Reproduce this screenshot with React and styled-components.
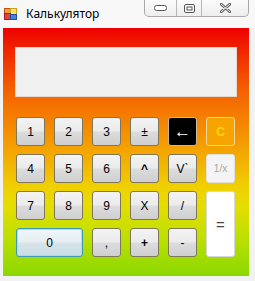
import React from 'react';
import styled, { createGlobalStyle, css } from 'styled-components';

const Global = createGlobalStyle`
  html, body {
    margin: 0;
    padding: 0;
    background: #f0f0f0;
  }
  #root {
    width: 255px;
    height: 281px;
    overflow: hidden;
  }
`;

const Window = styled.div`
  width: 255px;
  height: 281px;
  background: #f2f2f2;
  font-family: "Noto Sans", "Liberation Sans", sans-serif;
  display: flex;
  flex-direction: column;
`;

const TitleBar = styled.div`
  height: 28px;
  display: flex;
  align-items: flex-start;
  background: #f8f8f8;
`;

const AppIcon = styled.svg`
  margin: 8px 0 0 4px;
  flex-shrink: 0;
`;

const Title = styled.div`
  margin: 5px 0 0 9px;
  font-size: 12px;
  color: #000;
  flex: 1;
`;

const Controls = styled.div`
  display: flex;
  height: 16px;
  margin-right: 6px;
  border: 1px solid #a9a9a9;
  border-top: none;
  border-radius: 0 0 5px 5px;
  background: linear-gradient(#fbfbfb, #eeeeee);
  overflow: hidden;
`;

const Ctrl = styled.div`
  width: ${p => p.$w}px;
  display: flex;
  align-items: center;
  justify-content: center;
  & + & {
    border-left: 1px solid #b8b8b8;
  }
`;

const Panel = styled.div`
  width: 246px;
  height: 248px;
  margin-left: 3px;
  box-sizing: border-box;
  padding-top: 19px;
  background: linear-gradient(
    #ee0000 0%,
    #f02a00 10%,
    #f45e00 24%,
    #f58400 38%,
    #f3ac00 52%,
    #f0d000 64%,
    #e4de00 72%,
    #bfe000 84%,
    #8ad800 100%
  );
`;

const Display = styled.div`
  width: 222px;
  height: 50px;
  margin-left: 12px;
  box-sizing: border-box;
  background: #f0f0f0;
  border: 1px solid #e6d8cc;
`;

const Keys = styled.div`
  margin: 20px 0 0 13px;
  display: grid;
  grid-template-columns: repeat(6, 29px);
  grid-auto-rows: 29px;
  column-gap: 9px;
  row-gap: 8px;
`;

const variants = {
  normal: css`
    background: linear-gradient(#f3f3f3 0%, #ebebeb 48%, #dcdcdc 52%, #cfcfcf 100%);
    border: 1px solid #80775a;
    color: #000;
  `,
  dark: css`
    background: #000;
    border: 1px solid #c9b99a;
    color: #fff;
    font-size: 17px;
  `,
  orange: css`
    background: #f7a400;
    border: 1px solid #f5d6a0;
    color: #ffd800;
    font-weight: bold;
  `,
  disabled: css`
    background: #f4f4f4;
    border: 1px solid #e0e0e0;
    color: #a8a8a8;
    font-size: 10px;
  `,
  white: css`
    background: #fff;
    border: 1px solid #d8d8d8;
    color: #444;
    font-size: 15px;
  `,
  focus: css`
    background: linear-gradient(#f0f6f8 0%, #e6eff3 48%, #d6e4ea 52%, #cadde5 100%);
    border: 1px solid #3c9cb4;
    box-shadow: inset 0 0 0 1px #a8dcea;
    color: #000;
  `,
};

const Key = styled.div`
  box-sizing: border-box;
  border-radius: 3px;
  display: flex;
  align-items: center;
  justify-content: center;
  font-family: "Liberation Sans", Arial, sans-serif;
  font-size: 12px;
  font-weight: ${p => (p.$bold ? 'bold' : 'normal')};
  grid-column: ${p => p.$col || 'auto'};
  grid-row: ${p => p.$row || 'auto'};
  ${p => variants[p.$v || 'normal']}
`;

const keys = [
  { t: '1' }, { t: '2' }, { t: '3' }, { t: '±' }, { t: '←', v: 'dark' }, { t: 'C', v: 'orange' },
  { t: '4' }, { t: '5' }, { t: '6' }, { t: '^', bold: true }, { t: 'V`' }, { t: '1/x', v: 'disabled' },
  { t: '7' }, { t: '8' }, { t: '9' }, { t: 'X' }, { t: '/' },
  { t: '=', v: 'white', col: '6', row: '3 / span 2' },
  { t: '0', v: 'focus', col: '1 / span 2', row: '4' },
  { t: ',', col: '3', row: '4' }, { t: '+', col: '4', row: '4', bold: true }, { t: '-', col: '5', row: '4' },
];

export default function App() {
  return (
    <Window>
      <Global />
      <TitleBar>
        <AppIcon width="13" height="12" viewBox="0 0 13 12">
          <rect x="0.5" y="0.5" width="6" height="5" fill="#f4a020" stroke="#c05010" />
          <rect x="6.5" y="0.5" width="6" height="6" fill="#ffe060" stroke="#c8a020" />
          <rect x="0.5" y="5.5" width="6" height="6" fill="#e04040" stroke="#a02020" />
          <rect x="6.5" y="6.5" width="6" height="5" fill="#4a80d8" stroke="#2050a0" />
        </AppIcon>
        <Title>Калькулятор</Title>
        <Controls>
          <Ctrl $w={31}>
            <svg width="13" height="6" viewBox="0 0 13 6">
              <rect x="0.5" y="0.5" width="12" height="5" rx="2" fill="#fff" stroke="#555" />
            </svg>
          </Ctrl>
          <Ctrl $w={24}>
            <svg width="11" height="9" viewBox="0 0 11 9">
              <rect x="0.5" y="0.5" width="10" height="8" rx="1.5" fill="#fff" stroke="#555" />
              <rect x="3" y="3" width="5" height="3" fill="none" stroke="#555" />
            </svg>
          </Ctrl>
          <Ctrl $w={46}>
            <svg width="11" height="10" viewBox="0 0 11 10">
              <path d="M1 1 L10 9 M10 1 L1 9" stroke="#555" strokeWidth="2.6" strokeLinecap="round" />
              <path d="M1 1 L10 9 M10 1 L1 9" stroke="#fff" strokeWidth="1" strokeLinecap="round" />
            </svg>
          </Ctrl>
        </Controls>
      </TitleBar>
      <Panel>
        <Display />
        <Keys>
          {keys.map((k, i) => (
            <Key key={i} $v={k.v} $col={k.col} $row={k.row} $bold={k.bold}>
              {k.t}
            </Key>
          ))}
        </Keys>
      </Panel>
    </Window>
  );
}
